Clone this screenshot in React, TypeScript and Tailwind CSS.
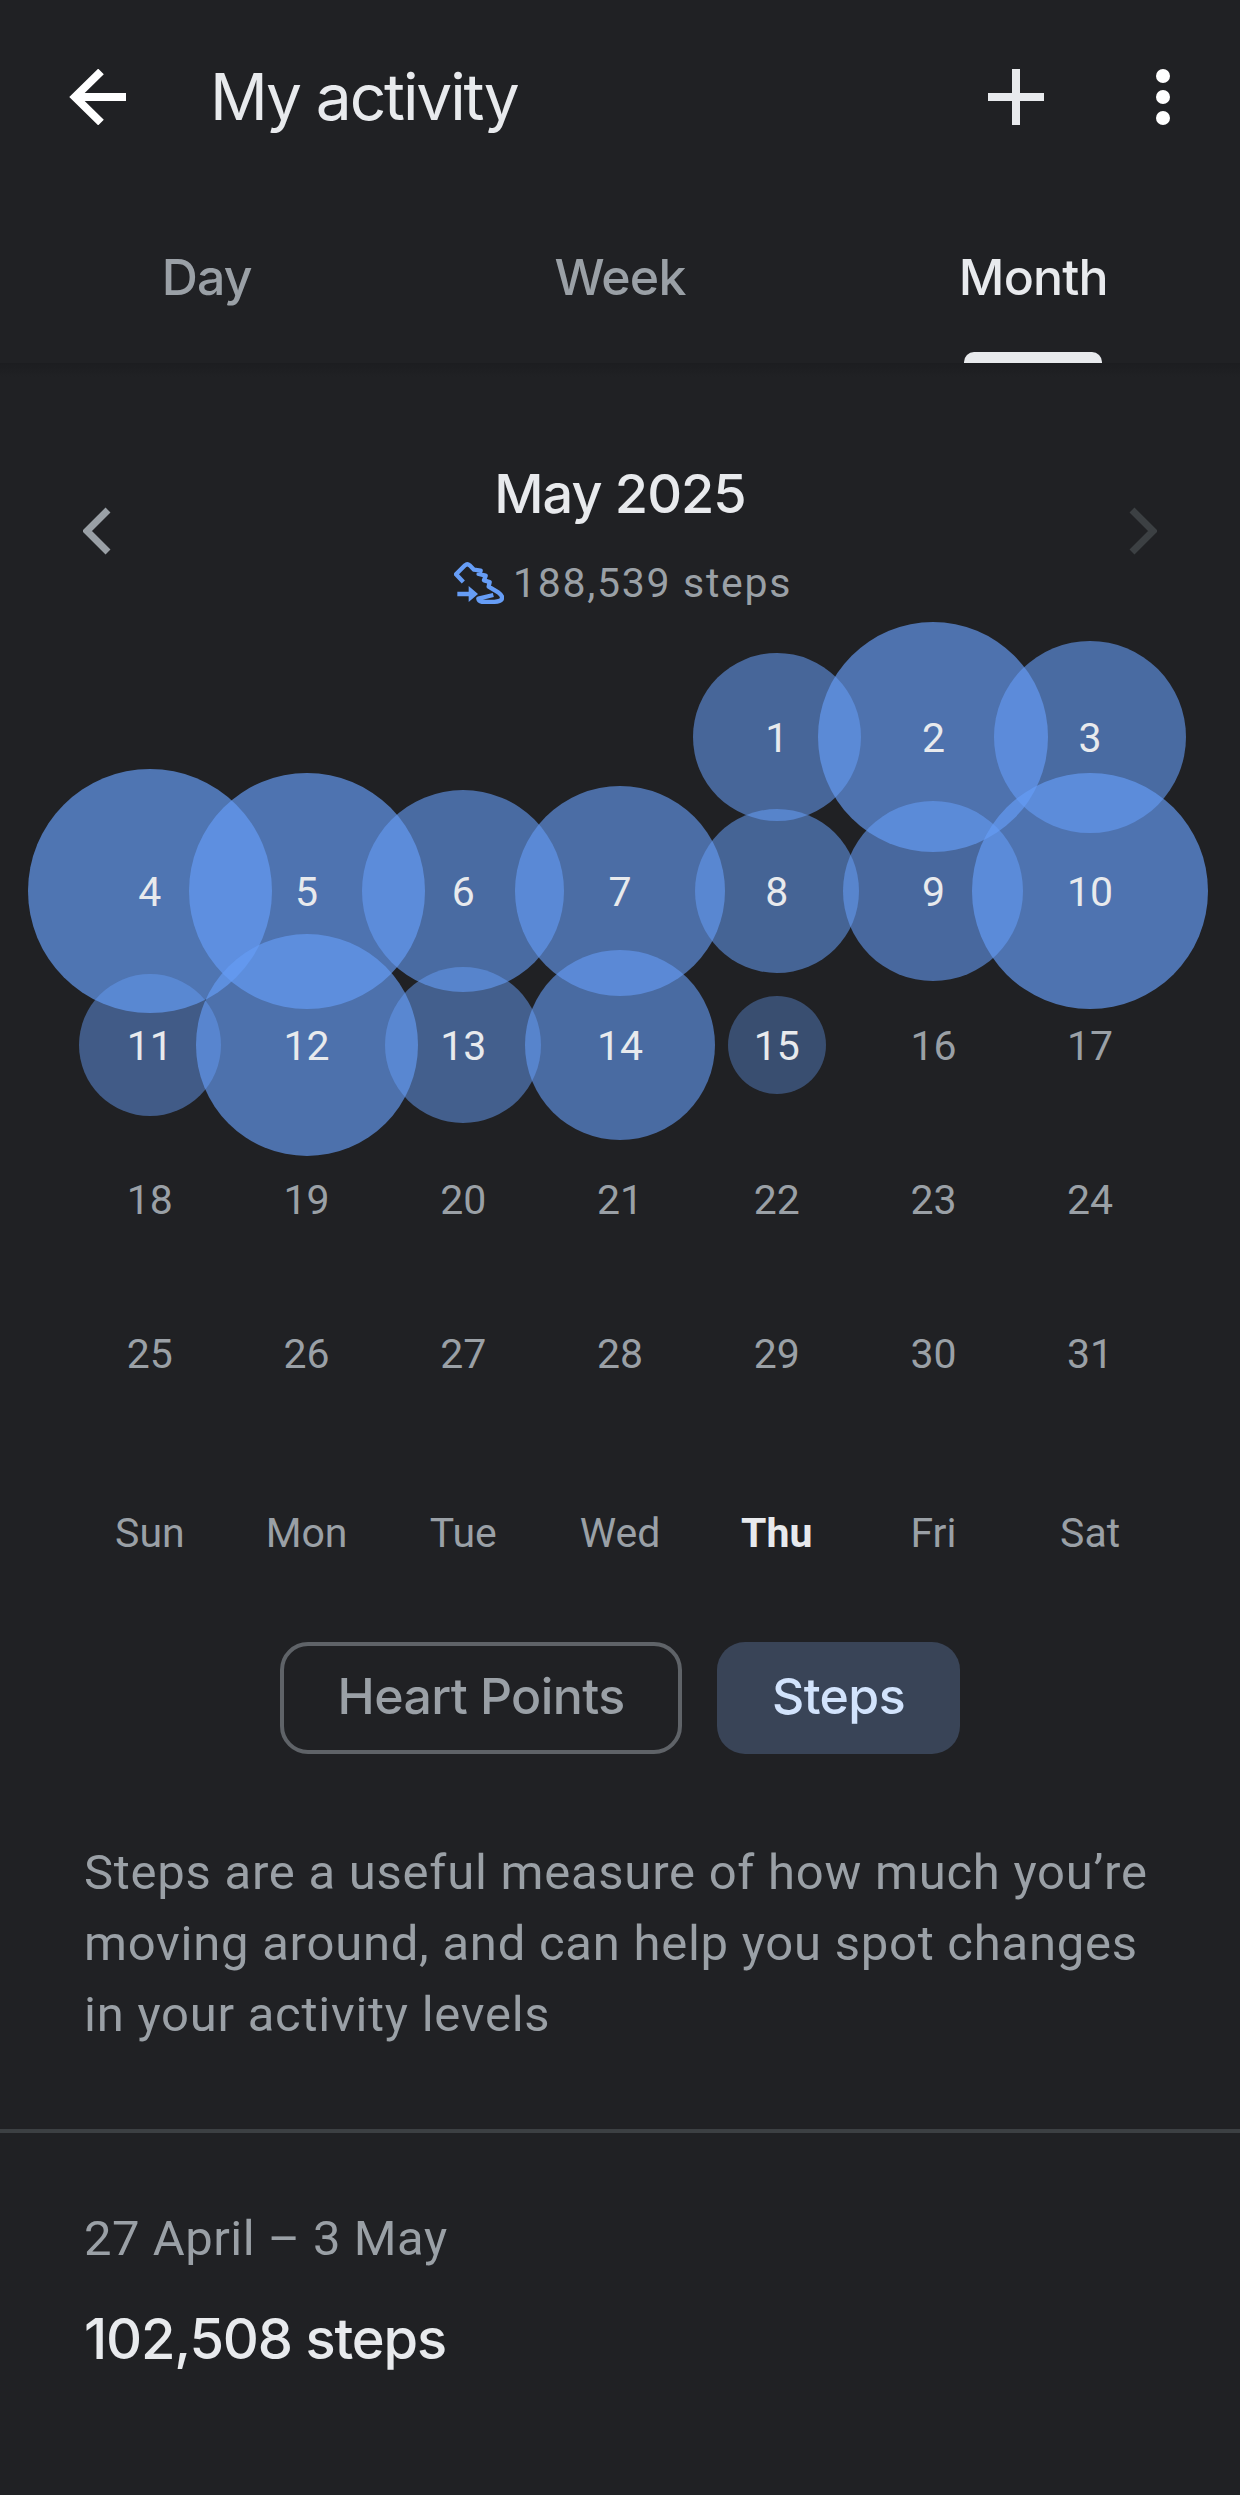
import React from 'react';

// day, radius, opacity; days without a radius have no bubble yet
const DAYS: { day: number; r?: number; o?: number }[] = [
  { day: 1, r: 84, o: 0.56 },
  { day: 2, r: 115, o: 0.66 },
  { day: 3, r: 96, o: 0.6 },
  { day: 4, r: 122, o: 0.68 },
  { day: 5, r: 118, o: 0.67 },
  { day: 6, r: 101, o: 0.6 },
  { day: 7, r: 105, o: 0.62 },
  { day: 8, r: 82, o: 0.54 },
  { day: 9, r: 90, o: 0.58 },
  { day: 10, r: 118, o: 0.67 },
  { day: 11, r: 71, o: 0.47 },
  { day: 12, r: 111, o: 0.65 },
  { day: 13, r: 78, o: 0.5 },
  { day: 14, r: 95, o: 0.6 },
  { day: 15, r: 49, o: 0.36 },
  ...Array.from({ length: 16 }, (_, i) => ({ day: i + 16 })),
];

const WEEKDAYS = ['Sun', 'Mon', 'Tue', 'Wed', 'Thu', 'Fri', 'Sat'];

function StepsIcon() {
  return (
    <svg width="50" height="42" viewBox="0 0 150 126" fill="none" className="shrink-0">
      <path
        d="M28 60 L6 37 L33 10 Q40 4 47 10 L60 23 L80 26 L74 36 L95 41 L90 55 L107 60 L104 74 L134 92 Q148 102 143 112 Q137 120 110 120 L86 120 Q74 118 73 110 L118 99"
        stroke="#669df6"
        strokeWidth="13"
        strokeLinejoin="round"
      />
      <path d="M10 89 H44 V72 L72 96 L44 120 V103 H10 Z" fill="#669df6" />
    </svg>
  );
}

export default function App() {
  return (
    <div className="w-[1240px] h-[2495px] overflow-hidden bg-[#202124] font-['Roboto',sans-serif] text-[#9aa0a6]">
      {/* Top bar */}
      <div className="flex h-[194px] items-center">
        <svg width="60" height="56" viewBox="0 0 60 56" fill="none" className="ml-[69px]">
          <path d="M57 28 H6 M32 2.500 L6 28 L32 53.500" stroke="#fff" strokeWidth="8" />
        </svg>
        <h1 className="ml-[81px] flex-1 font-['Inter',sans-serif] text-[64px] font-normal leading-none tracking-[-2.100px] text-[#e8eaed]">
          My activity
        </h1>
        <svg width="56" height="56" viewBox="0 0 56 56" className="mr-[112px]">
          <path d="M28 0 V56 M0 28 H56" stroke="#e8eaed" strokeWidth="8" />
        </svg>
        <div className="mr-[70px] flex flex-col gap-[7px]">
          <span className="size-[14px] rounded-full bg-white" />
          <span className="size-[14px] rounded-full bg-white" />
          <span className="size-[14px] rounded-full bg-white" />
        </div>
      </div>

      {/* Tabs */}
      <div className="grid h-[169px] grid-cols-3 font-['Inter',sans-serif] text-[50px] font-medium tracking-[-0.800px]">
        <div className="flex justify-center pt-[55px] leading-[56px]">Day</div>
        <div className="flex justify-center pt-[55px] leading-[56px]">Week</div>
        <div className="relative flex justify-center pt-[55px] leading-[56px] text-[#e8eaed]">
          Month
          <span className="absolute bottom-0 left-[137px] h-[11px] w-[138px] rounded-t-[10px] bg-[#e8eaed]" />
        </div>
      </div>
      <div className="h-[14px] bg-gradient-to-b from-[#1c1d20] to-[#202124]" />

      {/* Month heading */}
      <div className="flex h-[283px] items-start px-[83px]">
        <svg width="28" height="48" viewBox="0 0 28 48" fill="none" className="mt-[130px]">
          <path d="M25 3 L4 24 L25 45" stroke="#9aa0a6" strokeWidth="7" />
        </svg>
        <div className="flex flex-1 flex-col items-center pt-[87px]">
          <div className="font-['Inter',sans-serif] text-[54px] font-medium leading-[60px] tracking-[-1px] text-[#e8eaed]">
            May 2025
          </div>
          <div className="mt-[35px] flex items-center gap-[9px] pl-[6px] text-[41px] leading-[48px] tracking-[1.700px]">
            <StepsIcon />
            188,539 steps
          </div>
        </div>
        <svg width="28" height="48" viewBox="0 0 28 48" fill="none" className="mt-[130px]">
          <path d="M3 3 L24 24 L3 45" stroke="#3c4043" strokeWidth="7" />
        </svg>
      </div>

      {/* Calendar bubbles */}
      <div className="ml-[71.500px] grid w-[1097px] grid-cols-7 auto-rows-[154px]">
        {Array.from({ length: 4 }, (_, i) => <div key={i} />)}
        {DAYS.map(({ day, r, o }) => (
          <div key={day} className="relative flex items-center justify-center">
            {r && (
              <div
                className="absolute left-1/2 top-1/2 -translate-x-1/2 -translate-y-1/2 rounded-full bg-[#669df6]"
                style={{ width: r * 2, height: r * 2, opacity: o }}
              />
            )}
            <span className={`relative z-10 pt-[4px] text-[41px] ${r ? 'text-[#e8eaed]' : 'text-[#9aa0a6]'}`}>{day}</span>
          </div>
        ))}
      </div>

      {/* Weekdays */}
      <div className="ml-[71.500px] mt-[13px] grid w-[1097px] grid-cols-7 text-[41px] leading-[180px]">
        {WEEKDAYS.map((d) => (
          <div key={d} className={d === 'Thu' ? 'text-center font-bold text-[#e8eaed]' : 'text-center'}>
            {d}
          </div>
        ))}
      </div>

      {/* Metric toggle */}
      <div className="ml-[280px] mt-[19px] flex gap-[35px] font-['Inter',sans-serif] text-[50px] font-medium tracking-[-0.600px]">
        <div className="flex h-[112px] w-[402px] items-center justify-center rounded-[28px] border-[4px] border-[#5f6368] pb-[3px]">
          Heart Points
        </div>
        <div className="flex h-[112px] w-[243px] items-center justify-center rounded-[28px] bg-[#394457] pb-[3px] text-[#d2e3fc]">
          Steps
        </div>
      </div>

      {/* Description */}
      <p className="ml-[84px] mt-[83px] w-[1090px] text-[49px] leading-[71px] tracking-[0.750px]">
        Steps are a useful measure of how much you’re moving around, and can help you spot changes in your activity levels
      </p>

      <div className="mt-[79px] h-[4px] bg-[#3c4043]" />

      {/* Week summary */}
      <div className="pl-[84px] pt-[78px]">
        <div className="text-[49px] leading-[56px] tracking-[0.500px]">27 April – 3 May</div>
        <div className="mt-[42px] font-['Inter',sans-serif] text-[56px] font-medium leading-[60px] tracking-[-1.200px] text-[#e8eaed]">
          102,508 steps
        </div>
      </div>
    </div>
  );
}
